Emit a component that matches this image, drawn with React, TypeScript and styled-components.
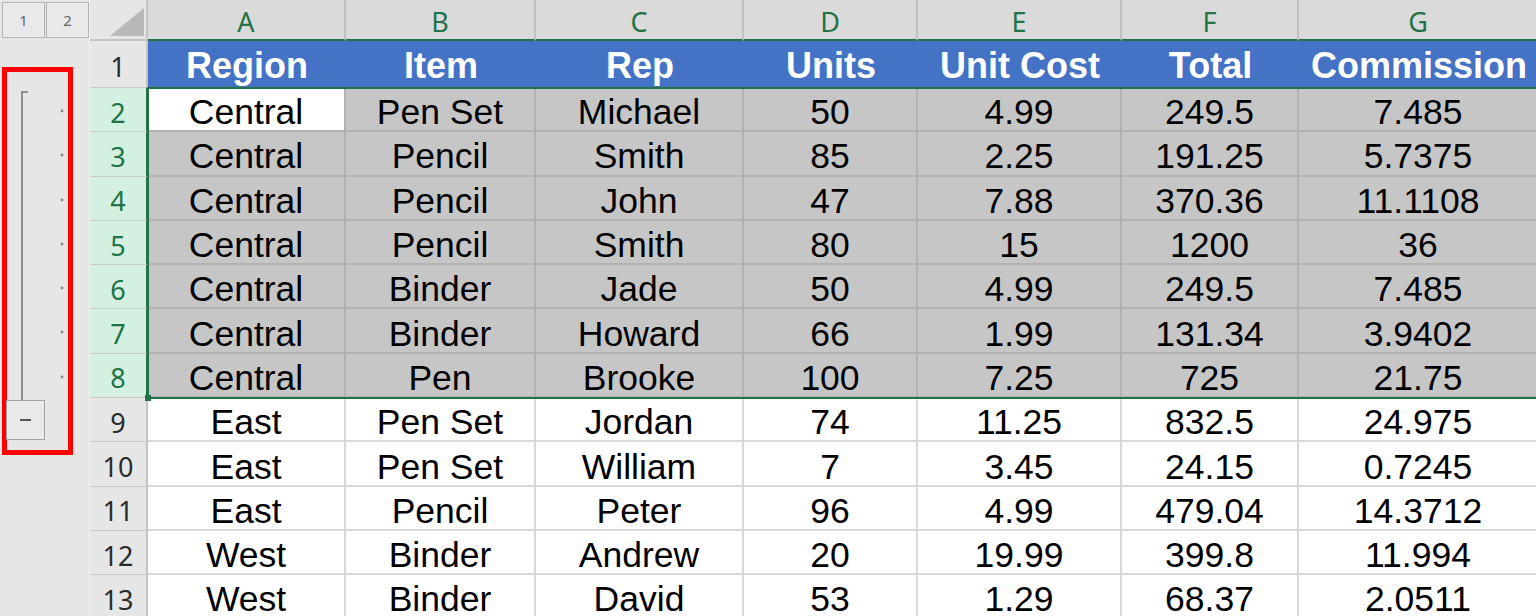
import React from "react";
import styled, { createGlobalStyle } from "styled-components";

const Global = createGlobalStyle`
  html, body { margin: 0; padding: 0; background: #ffffff; overflow: hidden; }
  body { width: 1536px; height: 616px; }
  * { box-sizing: border-box; }
`;

const GREEN = "#217346";

const cols = [
  { l: "A", w: 198, h: "Region" },
  { l: "B", w: 190, h: "Item" },
  { l: "C", w: 208, h: "Rep" },
  { l: "D", w: 174, h: "Units" },
  { l: "E", w: 204, h: "Unit Cost" },
  { l: "F", w: 177, h: "Total" },
  { l: "G", w: 240, h: "Commission" },
];

const rows: string[][] = [
  ["Central", "Pen Set", "Michael", "50", "4.99", "249.5", "7.485"],
  ["Central", "Pencil", "Smith", "85", "2.25", "191.25", "5.7375"],
  ["Central", "Pencil", "John", "47", "7.88", "370.36", "11.1108"],
  ["Central", "Pencil", "Smith", "80", "15", "1200", "36"],
  ["Central", "Binder", "Jade", "50", "4.99", "249.5", "7.485"],
  ["Central", "Binder", "Howard", "66", "1.99", "131.34", "3.9402"],
  ["Central", "Pen", "Brooke", "100", "7.25", "725", "21.75"],
  ["East", "Pen Set", "Jordan", "74", "11.25", "832.5", "24.975"],
  ["East", "Pen Set", "William", "7", "3.45", "24.15", "0.7245"],
  ["East", "Pencil", "Peter", "96", "4.99", "479.04", "14.3712"],
  ["West", "Binder", "Andrew", "20", "19.99", "399.8", "11.994"],
  ["West", "Binder", "David", "53", "1.29", "68.37", "2.0511"],
];

const Page = styled.div`
  display: flex;
  width: 1536px;
  height: 616px;
  overflow: hidden;
`;

const Outline = styled.div`
  width: 90px;
  flex: none;
  background: #e6e6e6;
  border-right: 1px solid #f2f2f2;
  display: flex;
  flex-direction: column;
`;

const LevelBar = styled.div`
  height: 40px;
  display: flex;
  gap: 1px;
  padding: 2px 0 0 2px;
`;

const LevelButton = styled.div`
  width: 43px;
  height: 36px;
  border: 1.5px solid #b4b4b4;
  background: #e9e9e9;
  color: #666666;
  font: 15px "Noto Sans", "DejaVu Sans", sans-serif;
  display: flex;
  align-items: center;
  justify-content: center;
`;

const RedBox = styled.div`
  margin: 27px 0 0 2px;
  width: 71px;
  height: 388px;
  border: 5px solid #ff0000;
  display: flex;
  flex-direction: column;
`;

const MinusButton = styled.div`
  width: 39px;
  height: 40px;
  margin-left: -1px;
  border: 1.5px solid #a2a2a2;
  background: #e9e9e9;
  display: flex;
  align-items: center;
  justify-content: center;
  &::before {
    content: "";
    display: block;
    width: 11px;
    height: 2px;
    background: #555555;
  }
`;

const Sheet = styled.div<{ $cols: string }>`
  position: relative;
  display: grid;
  grid-template-columns: ${(p) => p.$cols};
  grid-template-rows: 41px 47px repeat(12, 44.3px);
  flex: none;
  font-family: "Liberation Sans", Arial, sans-serif;
`;

const Corner = styled.div`
  background: #e6e6e6;
  border-right: 2px solid #c4c4c4;
  border-bottom: 2px solid #c4c4c4;
  display: flex;
  align-items: flex-end;
  justify-content: flex-end;
  padding: 0 2px 3px 0;
`;

const ColHead = styled.div`
  background: #dadada;
  border-right: 2px solid #c0c0c0;
  border-bottom: 2px solid ${GREEN};
  color: ${GREEN};
  font: 27px "Noto Sans", "DejaVu Sans", sans-serif;
  display: flex;
  align-items: center;
  justify-content: center;
  padding-top: 3px;
  overflow: hidden;
`;

const RowHead = styled.div<{ $sel?: boolean }>`
  background: ${(p) => (p.$sel ? "#d3f0e0" : "#e6e6e6")};
  color: ${(p) => (p.$sel ? GREEN : "#2b2b2b")};
  border-right: 2px solid ${(p) => (p.$sel ? GREEN : "#c4c4c4")};
  border-bottom: 1px solid #c9c9c9;
  font: 27px "Noto Sans", "DejaVu Sans", sans-serif;
  display: flex;
  align-items: center;
  justify-content: center;
  padding-top: 5px;
`;

const HeadCell = styled.div`
  background: #4472c4;
  color: #ffffff;
  font-weight: 700;
  font-size: 36px;
  display: flex;
  align-items: center;
  justify-content: center;
  white-space: nowrap;
  overflow: hidden;
  padding-top: 2px;
`;

const Cell = styled.div<{ $sel?: boolean; $active?: boolean }>`
  background: ${(p) => (p.$active ? "#ffffff" : p.$sel ? "#c6c6c6" : "#ffffff")};
  border-right: 2px solid ${(p) => (p.$sel ? "#b2b2b2" : "#d9d9d9")};
  border-bottom: 2px solid ${(p) => (p.$sel ? "#b2b2b2" : "#d9d9d9")};
  color: #000000;
  font-size: 35.5px;
  display: flex;
  align-items: center;
  justify-content: center;
  white-space: nowrap;
  overflow: hidden;
  padding-top: 7px;
`;

const Selection = styled.div`
  grid-column: 2 / 9;
  grid-row: 3 / 10;
  position: absolute;
  top: -1px;
  bottom: -1px;
  left: -1px;
  right: 0;
  border: 2px solid ${GREEN};
  pointer-events: none;
  z-index: 2;
`;

const FillHandle = styled.span`
  position: absolute;
  left: -4px;
  bottom: -4px;
  width: 6px;
  height: 6px;
  background: ${GREEN};
`;

function Bracket() {
  const dots = [39, 83, 128, 172, 216, 260, 305];
  return (
    <svg width="61" height="328" viewBox="0 0 61 328">
      <path d="M15 328 V20 H21" fill="none" stroke="#8e8e8e" strokeWidth="2" />
      {dots.map((y) => (
        <circle key={y} cx="55" cy={y} r="1.4" fill="#888888" />
      ))}
    </svg>
  );
}

export default function App() {
  const template = ["58px", ...cols.map((c) => `${c.w}px`)].join(" ");
  return (
    <>
      <Global />
      <Page>
        <Outline>
          <LevelBar>
            <LevelButton>1</LevelButton>
            <LevelButton>2</LevelButton>
          </LevelBar>
          <RedBox>
            <Bracket />
            <MinusButton />
          </RedBox>
        </Outline>
        <Sheet $cols={template}>
          <Corner>
            <svg width="34" height="28" viewBox="0 0 34 28">
              <polygon points="34,0 34,28 0,28" fill="#b9b9b9" />
            </svg>
          </Corner>
          {cols.map((c) => (
            <ColHead key={c.l}>{c.l}</ColHead>
          ))}
          <RowHead>1</RowHead>
          {cols.map((c) => (
            <HeadCell key={c.h}>{c.h}</HeadCell>
          ))}
          {rows.map((r, i) => {
            const sel = i < 7;
            return (
              <React.Fragment key={i}>
                <RowHead $sel={sel}>{i + 2}</RowHead>
                {r.map((v, j) => (
                  <Cell key={j} $sel={sel} $active={i === 0 && j === 0}>
                    {v}
                  </Cell>
                ))}
              </React.Fragment>
            );
          })}
          <Selection>
            <FillHandle />
          </Selection>
        </Sheet>
      </Page>
    </>
  );
}
